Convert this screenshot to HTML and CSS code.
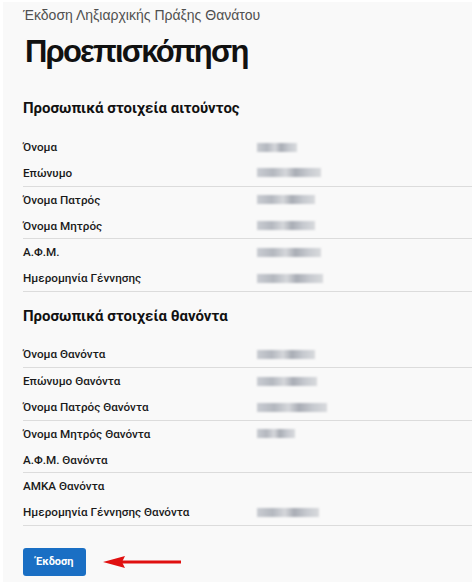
FILE: index.html
```html
<!DOCTYPE html>
<html lang="el">
<head>
<meta charset="utf-8">
<link rel="stylesheet" href="styles.css">
</head>
<body>
<div class="panel">
  <div class="subtitle">Έκδοση Ληξιαρχικής Πράξης Θανάτου</div>
  <h1 class="title">Προεπισκόπηση</h1>

  <h2 class="section first">Προσωπικά στοιχεία αιτούντος</h2>
  <div class="list">
    <div class="row"><div class="label">Όνομα</div><div class="value"><span class="blur" style="width:40px"></span></div></div>
    <div class="row sep"><div class="label">Επώνυμο</div><div class="value"><span class="blur" style="width:64px"></span></div></div>
    <div class="row"><div class="label">Όνομα Πατρός</div><div class="value"><span class="blur" style="width:58px"></span></div></div>
    <div class="row sep"><div class="label">Όνομα Μητρός</div><div class="value"><span class="blur" style="width:58px"></span></div></div>
    <div class="row"><div class="label">Α.Φ.Μ.</div><div class="value"><span class="blur" style="width:64px"></span></div></div>
    <div class="row sep"><div class="label">Ημερομηνία Γέννησης</div><div class="value"><span class="blur" style="width:66px"></span></div></div>
  </div>

  <h2 class="section">Προσωπικά στοιχεία θανόντα</h2>
  <div class="list">
    <div class="row sep"><div class="label">Όνομα Θανόντα</div><div class="value"><span class="blur" style="width:58px"></span></div></div>
    <div class="row"><div class="label">Επώνυμο Θανόντα</div><div class="value"><span class="blur" style="width:60px"></span></div></div>
    <div class="row sep"><div class="label">Όνομα Πατρός Θανόντα</div><div class="value"><span class="blur" style="width:70px"></span></div></div>
    <div class="row"><div class="label">Όνομα Μητρός Θανόντα</div><div class="value"><span class="blur" style="width:38px"></span></div></div>
    <div class="row sep"><div class="label">Α.Φ.Μ. Θανόντα</div><div class="value"></div></div>
    <div class="row"><div class="label">ΑΜΚΑ Θανόντα</div><div class="value"></div></div>
    <div class="row sep"><div class="label">Ημερομηνία Γέννησης Θανόντα</div><div class="value"><span class="blur" style="width:62px"></span></div></div>
  </div>

  <div class="actions">
    <button class="btn">Έκδοση</button>
    <svg class="arrow" width="82" height="16" viewBox="0 0 82 16">
      <line x1="16" y1="8" x2="78" y2="8" stroke="#e01010" stroke-width="3"/>
      <polygon points="0,8 22,2 19,8 22,14" fill="#e01010"/>
    </svg>
  </div>
</div>
</body>
</html>
```

FILE: styles.css
```css
html, body {
  margin: 0;
  padding: 0;
  background: #ffffff;
}

.panel {
  display: flex;
  flex-direction: column;
  margin: 2px 2px 3px 3px;
  background: #f9f9f9;
  padding: 4px 0 6px 20px;
  height: 580px;
  box-sizing: border-box;
  font-family: Roboto, "Liberation Sans", sans-serif;
  color: #1b1b1b;
}

.subtitle {
  font-family: "Liberation Sans", Arial, sans-serif;
  font-size: 14px;
  line-height: 18px;
  color: #505050;
}

.title {
  margin: 10px 0 0 2px;
  font-family: "Liberation Sans", Arial, sans-serif;
  font-size: 31px;
  line-height: 36px;
  letter-spacing: -1.8px;
  font-weight: bold;
  color: #111;
}

.section {
  margin: 14px 0 16px 0;
  font-size: 15px;
  line-height: 20px;
  font-weight: 700;
  color: #111;
}

.section.first {
  margin: 28px 0 16px 0;
}

.list {
  display: flex;
  flex-direction: column;
}

.row {
  display: grid;
  grid-template-columns: 234px 1fr;
  align-items: center;
  height: 26.3px;
  box-sizing: border-box;
}

.row.sep {
  border-bottom: 1px solid #dcdcdc;
}

.label {
  font-size: 11.7px;
  font-weight: 500;
  color: #1a1a1a;
}

.value {
  display: flex;
  align-items: center;
}

.blur {
  display: inline-block;
  height: 9px;
  background: linear-gradient(90deg, #c9ccd2 0%, #b4b8bf 25%, #d5d7db 45%, #a9adb5 60%, #c7cad0 80%, #d8dadd 100%);
  filter: blur(1px);
}

.actions {
  margin-top: 22px;
  display: flex;
  align-items: center;
  gap: 17px;
}

.btn {
  width: 63px;
  height: 28px;
  border: none;
  border-radius: 3px;
  background: #1a6fc4;
  color: #fff;
  font-family: Roboto, "Liberation Sans", sans-serif;
  font-size: 11px;
  font-weight: 700;
  padding: 0;
}

.arrow {
  display: block;
}
```
